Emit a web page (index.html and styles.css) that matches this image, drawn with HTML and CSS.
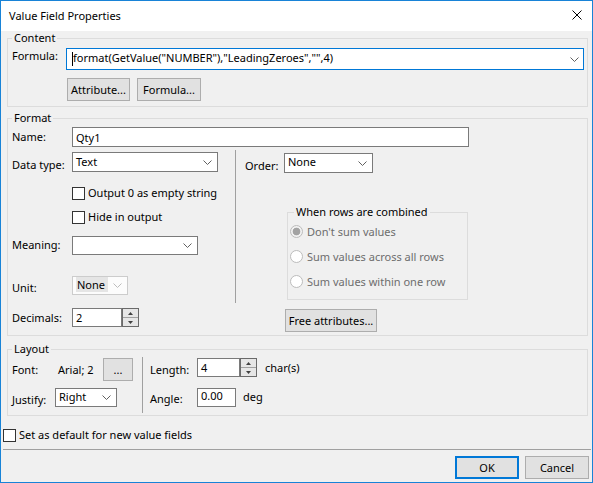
FILE: index.html
```html
<!DOCTYPE html>
<html lang="en">
<head>
<meta charset="utf-8">
<title>Value Field Properties</title>
<link rel="stylesheet" href="styles.css">
</head>
<body>
<div class="window">
  <div class="titlebar">
    <div class="title">Value Field Properties</div>
    <svg class="close" width="10" height="10" viewBox="0 0 10 10"><path d="M0.5 0.5 L9.5 9.5 M9.5 0.5 L0.5 9.5" stroke="#000" stroke-width="1" fill="none"/></svg>
  </div>
  <div class="body">
    <fieldset class="group content-group">
      <legend>Content</legend>
      <div class="row">
        <span class="lbl lbl-formula">Formula:</span>
        <div class="combo">
          <span class="caret"></span><span class="combo-text">format(GetValue("NUMBER"),"LeadingZeroes","",4)</span>
          <svg class="chev" width="9" height="5" viewBox="0 0 9 5"><polyline points="0.5,0.5 4.5,4.5 8.5,0.5" fill="none" stroke="#606060"/></svg>
        </div>
      </div>
      <div class="row btn-row">
        <button class="btn btn-attr">Attribute...</button>
        <button class="btn btn-formula">Formula...</button>
      </div>
    </fieldset>

    <fieldset class="group format-group">
      <legend>Format</legend>
      <div class="row">
        <span class="lbl w60 pt2">Name:</span>
        <div class="textbox name-box">Qty1</div>
      </div>
      <div class="split">
        <div class="left-col">
          <div class="row dt-row">
            <span class="lbl w60 pt5">Data type:</span>
            <div class="select dt-select"><span class="sel-text">Text</span><svg class="chev" width="9" height="5" viewBox="0 0 9 5"><polyline points="0.5,0.5 4.5,4.5 8.5,0.5" fill="none" stroke="#606060"/></svg></div>
          </div>
          <div class="check-row chk1"><span class="chk"></span><span class="chk-lbl">Output 0 as empty string</span></div>
          <div class="check-row chk2"><span class="chk"></span><span class="chk-lbl">Hide in output</span></div>
          <div class="row meaning-row">
            <span class="lbl w60 pt1">Meaning:</span>
            <div class="select meaning-select"><span class="sel-text"></span><svg class="chev" width="9" height="5" viewBox="0 0 9 5"><polyline points="0.5,0.5 4.5,4.5 8.5,0.5" fill="none" stroke="#606060"/></svg></div>
          </div>
          <div class="row unit-row">
            <span class="lbl w60 pt4">Unit:</span>
            <div class="select sel-disabled unit-select"><span class="sel-text"><span class="hl">None</span></span><svg class="chev" width="9" height="5" viewBox="0 0 9 5"><polyline points="0.5,0.5 4.5,4.5 8.5,0.5" fill="none" stroke="#bcbcbc"/></svg></div>
          </div>
        </div>
        <div class="vdiv"></div>
        <div class="right-col">
          <div class="row order-row">
            <span class="lbl w39 pt5">Order:</span>
            <div class="select order-select"><span class="sel-text">None</span><svg class="chev" width="9" height="5" viewBox="0 0 9 5"><polyline points="0.5,0.5 4.5,4.5 8.5,0.5" fill="none" stroke="#606060"/></svg></div>
          </div>
          <fieldset class="subgroup">
            <legend>When rows are combined</legend>
            <div class="radio-row"><span class="radio checked"></span><span class="radio-lbl">Don't sum values</span></div>
            <div class="radio-row"><span class="radio"></span><span class="radio-lbl">Sum values across all rows</span></div>
            <div class="radio-row"><span class="radio"></span><span class="radio-lbl">Sum values within one row</span></div>
          </fieldset>
        </div>
      </div>
      <div class="row bottom-row">
        <div class="dec-cell">
          <span class="lbl w60 pt2">Decimals:</span>
          <div class="spinner">
            <div class="spin-field dec-field">2</div>
            <div class="spin-btns">
              <span class="spin-half"><svg width="5" height="3" viewBox="0 0 5 3"><path d="M0 3 L2.5 0 L5 3 Z" fill="#404040"/></svg></span>
              <span class="spin-half spin-low"><svg width="5" height="3" viewBox="0 0 5 3"><path d="M0 0 L2.5 3 L5 0 Z" fill="#404040"/></svg></span>
            </div>
          </div>
        </div>
        <button class="btn btn-free">Free attributes...</button>
      </div>
    </fieldset>

    <fieldset class="group layout-group">
      <legend>Layout</legend>
      <div class="layout-body">
        <div class="lay-left">
          <div class="row font-row">
            <span class="lbl w46 pt4">Font:</span>
            <span class="lbl w45 pt4">Arial; 2</span>
            <button class="btn btn-dots">...</button>
          </div>
          <div class="row justify-row">
            <span class="lbl w43 pt4">Justify:</span>
            <div class="select justify-select"><span class="sel-text">Right</span><svg class="chev" width="9" height="5" viewBox="0 0 9 5"><polyline points="0.5,0.5 4.5,4.5 8.5,0.5" fill="none" stroke="#606060"/></svg></div>
          </div>
        </div>
        <div class="lay-div"></div>
        <div class="lay-right">
          <div class="row">
            <span class="lbl w47 pt4">Length:</span>
            <div class="spinner">
              <div class="spin-field len-field">4</div>
              <div class="spin-btns">
                <span class="spin-half"><svg width="5" height="3" viewBox="0 0 5 3"><path d="M0 3 L2.5 0 L5 3 Z" fill="#404040"/></svg></span>
                <span class="spin-half spin-low"><svg width="5" height="3" viewBox="0 0 5 3"><path d="M0 0 L2.5 3 L5 0 Z" fill="#404040"/></svg></span>
              </div>
            </div>
            <span class="lbl unit-char">char(s)</span>
          </div>
          <div class="row angle-row">
            <span class="lbl w47 pt3">Angle:</span>
            <div class="textbox angle-field">0.00</div>
            <span class="lbl unit-deg">deg</span>
          </div>
        </div>
      </div>
    </fieldset>

    <div class="check-row default-row"><span class="chk"></span><span class="chk-lbl">Set as default for new value fields</span></div>
    <div class="separator"></div>
    <div class="dialog-buttons">
      <button class="btn btn-ok">OK</button>
      <button class="btn btn-cancel">Cancel</button>
    </div>
  </div>
</div>
</body>
</html>
```

FILE: styles.css
```css
* { box-sizing: border-box; }
html, body { margin: 0; padding: 0; }
body {
  font-family: "Noto Sans", "DejaVu Sans", sans-serif;
  font-size: 11px;
  line-height: 15px;
  color: #000;
  background: #fff;
}
.window {
  width: 593px;
  height: 483px;
  border: 1px solid #1883d7;
  background: #f0f0f0;
  display: flex;
  flex-direction: column;
  overflow: hidden;
}
.titlebar {
  flex: none;
  height: 30px;
  background: #fff;
  display: flex;
  align-items: flex-start;
}
.title { flex: 1; margin: 7px 0 0 8px; }
.close { flex: none; margin: 9px 10px 0 0; display: block; }
.body { flex: 1; display: flex; flex-direction: column; }

.row { display: flex; align-items: flex-start; }
.lbl { flex: none; white-space: nowrap; }
.w39 { width: 39px; }
.w43 { width: 43px; }
.w45 { width: 45px; }
.w46 { width: 46px; }
.w47 { width: 47px; }
.w60 { width: 60px; }
.pt1 { padding-top: 1px; }
.pt2 { padding-top: 2px; }
.pt3 { padding-top: 3px; }
.pt4 { padding-top: 4px; }
.pt5 { padding-top: 5px; }

/* group boxes */
.group {
  margin: 3px 4px 0 6px;
  border: 1px solid #dcdcdc;
  min-width: 0;
  padding: 1px 0 3px 4px;
}
.group > legend, .subgroup > legend {
  padding: 0 2px;
  line-height: 16px;
}
.content-group { margin-top: -1px; padding: 2px 3px 5px 4px; }
.format-group { margin-top: 3px; padding: 1px 0 3px 4px; }
.layout-group { margin-top: 5px; padding: 1px 0 2px 4px; }

/* formula combo */
.lbl-formula { width: 54px; }
.combo {
  flex: 1;
  height: 22px;
  border: 1px solid #0078d7;
  background: #fff;
  display: flex;
  align-items: flex-start;
  padding: 1px 0 0 5px;
}
.caret { flex: none; width: 1px; height: 14px; background: #000; margin-top: 2px; }
.combo-text { flex: 1; white-space: nowrap; }
.combo .chev { align-self: center; margin-right: 4px; flex: none; }

/* buttons */
.btn {
  flex: none;
  font: inherit;
  line-height: 15px;
  color: #000;
  background: #e1e1e1;
  border: 1px solid #adadad;
  height: 23px;
  padding: 0;
  margin: 0;
  display: flex;
  align-items: center;
  justify-content: center;
}
.btn-row { margin-top: 8px; padding-left: 55px; }
.btn-attr { width: 63px; }
.btn-formula { width: 64px; margin-left: 7px; }
.btn-free { width: 92px; margin: 1px 0 0 49px; }
.btn-dots { width: 30px; }

/* text boxes and selects */
.textbox {
  flex: none;
  height: 20px;
  border: 1px solid #7a7a7a;
  background: #fff;
  padding: 2px 0 0 3px;
  white-space: nowrap;
}
.name-box { width: 397px; }
.select {
  flex: none;
  display: flex;
  align-items: flex-start;
  border: 1px solid #7a7a7a;
  background: #fff;
  padding: 0 0 0 3px;
  height: 20px;
}
.select .sel-text { flex: 1; white-space: nowrap; }
.select .chev { align-self: center; margin-right: 5px; flex: none; }
.dt-select { width: 146px; padding-top: 1px; }
.order-select { width: 89px; }
.meaning-select { width: 126px; height: 19px; }
.unit-select { width: 56px; height: 19px; }
.justify-select { width: 62px; height: 19px; }
.sel-disabled { border-color: #cccccc; background: #fcfcfc; }
.hl { background: #e5e5e5; padding: 0 3px 0 1px; display: inline-block; }

/* split area */
.split { display: flex; margin-top: 3px; height: 153px; }
.left-col { width: 223px; flex: none; display: flex; flex-direction: column; }
.vdiv { width: 1px; flex: none; background: #a0a0a0; }
.right-col { flex: 1; display: flex; flex-direction: column; align-items: flex-start; padding-left: 9px; }
.dt-row { margin-top: 2px; }
.meaning-row { margin-top: 12px; }
.unit-row { margin-top: 21px; }
.order-row { margin-top: 3px; }

/* checkboxes */
.check-row { display: flex; align-items: flex-start; height: 15px; }
.chk1 { margin: 13px 0 0 60px; }
.chk2 { margin: 9px 0 0 60px; }
.chk {
  flex: none;
  width: 13px;
  height: 13px;
  border: 1px solid #333;
  background: #fff;
  margin-top: 2px;
}
.chk-lbl { margin-left: 3px; white-space: nowrap; }
.default-row { margin-top: 11px; padding-left: 2px; }

/* radio group */
.subgroup {
  margin: 31px 0 0 42px;
  width: 181px;
  border: 1px solid #dcdcdc;
  padding: 3px 0 10px 2px;
  min-width: 0;
}
.subgroup > legend { margin-left: 4px; }
.radio-row { display: flex; align-items: center; height: 16px; color: #6d6d6d; }
.radio-row + .radio-row { margin-top: 9px; }
.radio {
  flex: none;
  width: 13px;
  height: 13px;
  border-radius: 50%;
  border: 1px solid #bcbcbc;
  background: #fff;
}
.radio.checked { background: radial-gradient(circle, #a3a3a3 0 3.5px, #f2f2f2 4.2px); }
.radio-lbl { margin-left: 4px; white-space: nowrap; }

/* spinners */
.bottom-row { margin-top: 5px; }
.dec-cell { width: 224px; flex: none; display: flex; align-items: flex-start; }
.spinner { display: flex; flex: none; }
.spin-field {
  height: 19px;
  border: 1px solid #7a7a7a;
  background: #fff;
  padding: 1px 0 0 3px;
}
.dec-field { width: 50px; }
.len-field { width: 43px; }
.spin-btns {
  flex: none;
  width: 17px;
  height: 19px;
  border: 1px solid #6a6a6a;
  display: flex;
  flex-direction: column;
  background: #e6e6e6;
}
.spin-half { flex: 1; display: flex; align-items: center; justify-content: center; }
.spin-half svg { display: block; }
.spin-low { border-top: 1px solid #a0a0a0; }

/* layout group */
.layout-body { display: flex; align-items: flex-start; }
.lay-left { width: 130px; flex: none; }
.font-row { height: 23px; }
.justify-row { margin-top: 7px; }
.lay-div { width: 1px; height: 56px; margin-top: -1px; background: #a0a0a0; flex: none; }
.lay-right { padding-left: 7px; }
.angle-row { margin-top: 11px; }
.angle-field { width: 39px; height: 19px; line-height: 13px; padding: 0 0 0 3px; }
.unit-char { margin-left: 8px; padding-top: 2px; }
.unit-deg { margin-left: 7px; padding-top: 1px; }

/* footer */
.separator { height: 1px; background: #a0a0a0; margin: 7px 1px 0 2px; flex: none; }
.dialog-buttons { display: flex; justify-content: flex-end; margin-top: 6px; padding-right: 3px; }
.btn-ok { width: 64px; border: 2px solid #0078d7; }
.btn-cancel { width: 64px; margin-left: 6px; }
```
